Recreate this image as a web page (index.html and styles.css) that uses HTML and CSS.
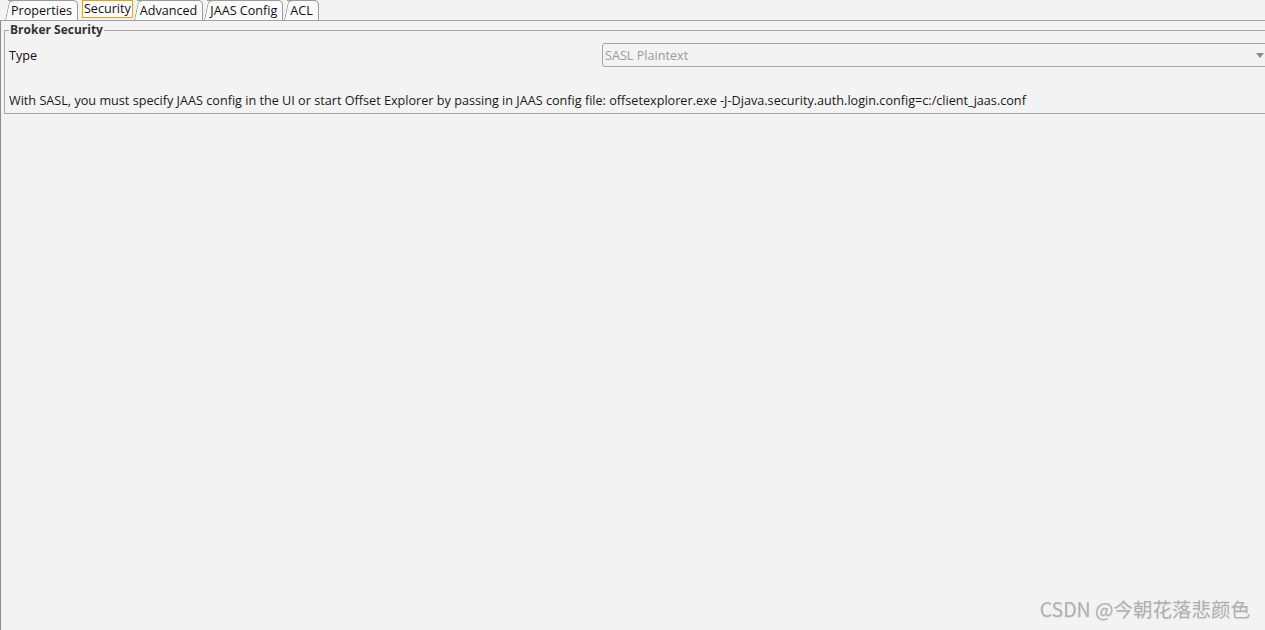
FILE: index.html
```html
<!DOCTYPE html>
<html>
<head>
<meta charset="utf-8">
<link rel="stylesheet" href="styles.css">
</head>
<body>
<div class="tabbar">
  <div class="tab">Properties</div>
  <div class="tab active">Security</div>
  <div class="tab">Advanced</div>
  <div class="tab">JAAS Config</div>
  <div class="tab">ACL</div>
</div>
<div class="panel">
  <fieldset class="group">
    <legend class="legend">Broker Security</legend>
    <div class="row">
      <div class="label">Type</div>
      <div class="select">
        <span class="value">SASL Plaintext</span>
        <span class="arrow"></span>
      </div>
    </div>
    <div class="note">With SASL, you must specify JAAS config in the UI or start Offset Explorer by passing in JAAS config file: offsetexplorer.exe -J-Djava.security.auth.login.config=c:/client_jaas.conf</div>
  </fieldset>
  <div class="watermark">CSDN @今朝花落悲颜色</div>
</div>
</body>
</html>
```
FILE: styles.css
```css
html, body {
  margin: 0;
  padding: 0;
  height: 100%;
  background: #f3f3f3;
  overflow: hidden;
}
body {
  font-family: "Open Sans", "Noto Sans", "Noto Sans CJK SC", sans-serif;
  font-size: 12.65px;
  color: #1a1a1a;
  width: 1265px;
  height: 630px;
}
.tabbar {
  display: flex;
  align-items: flex-end;
  height: 21px;
  padding-left: 8px;
  gap: 4px;
  border-bottom: 1px solid #a0a0a0;
  box-sizing: border-box;
}
.tab {
  position: relative;
  isolation: isolate;
  height: 20px;
  line-height: 19px;
  padding: 0 5px 0 3px;
  background: #fafafa;
  border-top: 1px solid #9a9a9a;
  border-right: 1px solid #9a9a9a;
  border-top-right-radius: 5px;
  box-sizing: border-box;
  color: #111;
  font-size: 12.6px;
}
.tab::before {
  content: "";
  position: absolute;
  left: -3px;
  top: -1px;
  bottom: 0;
  width: 8px;
  border-left: 1px solid #9a9a9a;
  border-top: 1px solid #9a9a9a;
  border-top-left-radius: 6px 4px;
  transform: skewX(-12deg);
  transform-origin: bottom left;
  background: #fafafa;
  z-index: -1;
}
.tab.active {
  border: 1px solid #f0a000;
  border-radius: 0;
  height: 18px;
  line-height: 16px;
  margin-bottom: 2px;
  padding: 0 1px;
  background: #fff;
}
.tab.active::before {
  display: none;
}
.panel {
  height: 609px;
  border-left: 1px solid #8c8c8c;
  box-sizing: border-box;
  padding: 2px 0 0 3px;
  display: flex;
  flex-direction: column;
  justify-content: space-between;
}
.group {
  margin: 0;
  padding: 0 0 3px 4px;
  width: 1280px;
  border: 1px solid #a8a8a8;
  border-right: none;
  box-sizing: border-box;
  min-width: 0;
}
.legend {
  padding: 0 1px;
  margin-left: 0;
  font-weight: bold;
  color: #333;
  font-size: 12px;
  line-height: 14px;
}
.row {
  display: flex;
  align-items: center;
  height: 26px;
  margin-top: 5px;
}
.label {
  width: 593px;
  color: #1a0a22;
}
.select {
  flex: 1;
  height: 24px;
  border: 1px solid #a6a6a6;
  border-radius: 3px;
  display: flex;
  align-items: center;
  justify-content: space-between;
  padding: 0 0 0 2px;
  box-sizing: border-box;
  color: #9a9a9a;
  margin-right: -3px;
}
.arrow {
  width: 0;
  height: 0;
  margin-right: 22px;
  border-left: 4px solid transparent;
  border-right: 4px solid transparent;
  border-top: 5px solid #8a8a8a;
}
.note {
  margin-top: 22px;
  line-height: 20px;
  white-space: nowrap;
}
.watermark {
  align-self: flex-end;
  margin: 0 15px 7px 0;
  font-family: "Noto Sans CJK SC", sans-serif;
  font-size: 19.5px;
  color: #b0b0b0;
  text-shadow: 0 1px 1px #e0e0e0;
}
```
